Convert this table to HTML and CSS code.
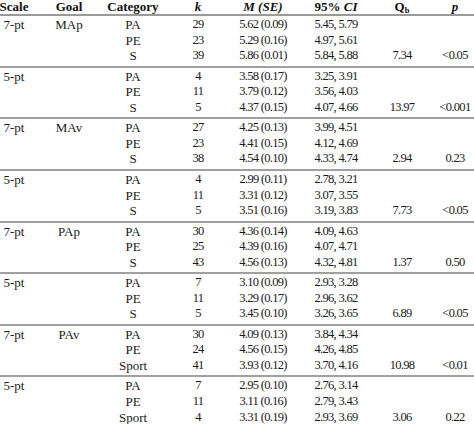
FILE: index.html
```html
<!DOCTYPE html>
<html lang="en">
<head>
<meta charset="utf-8">
<title>Table</title>
<link rel="stylesheet" href="styles.css">
</head>
<body>
<div class="table">
  <div class="row head">
    <div class="c">Scale</div>
    <div class="c">Goal</div>
    <div class="c">Category</div>
    <div class="c"><i>k</i></div>
    <div class="c"><i>M (SE)</i></div>
    <div class="c">95% <i>CI</i></div>
    <div class="c">Q<sub>b</sub></div>
    <div class="c"><i>p</i></div>
  </div>

  <div class="group">
    <div class="row"><div class="c">7-pt</div><div class="c">MAp</div><div class="c">PA</div><div class="c n">29</div><div class="c n">5.62 (0.09)</div><div class="c n">5.45, 5.79</div><div class="c n"></div><div class="c n"></div></div>
    <div class="row"><div class="c"></div><div class="c"></div><div class="c">PE</div><div class="c n">23</div><div class="c n">5.29 (0.16)</div><div class="c n">4.97, 5.61</div><div class="c n"></div><div class="c n"></div></div>
    <div class="row"><div class="c"></div><div class="c"></div><div class="c">S</div><div class="c n">39</div><div class="c n">5.86 (0.01)</div><div class="c n">5.84, 5.88</div><div class="c n">7.34</div><div class="c n">&lt;0.05</div></div>
  </div>

  <div class="group">
    <div class="row"><div class="c">5-pt</div><div class="c"></div><div class="c">PA</div><div class="c n">4</div><div class="c n">3.58 (0.17)</div><div class="c n">3.25, 3.91</div><div class="c n"></div><div class="c n"></div></div>
    <div class="row"><div class="c"></div><div class="c"></div><div class="c">PE</div><div class="c n">11</div><div class="c n">3.79 (0.12)</div><div class="c n">3.56, 4.03</div><div class="c n"></div><div class="c n"></div></div>
    <div class="row"><div class="c"></div><div class="c"></div><div class="c">S</div><div class="c n">5</div><div class="c n">4.37 (0.15)</div><div class="c n">4.07, 4.66</div><div class="c n">13.97</div><div class="c n">&lt;0.001</div></div>
  </div>

  <div class="group">
    <div class="row"><div class="c">7-pt</div><div class="c">MAv</div><div class="c">PA</div><div class="c n">27</div><div class="c n">4.25 (0.13)</div><div class="c n">3.99, 4.51</div><div class="c n"></div><div class="c n"></div></div>
    <div class="row"><div class="c"></div><div class="c"></div><div class="c">PE</div><div class="c n">23</div><div class="c n">4.41 (0.15)</div><div class="c n">4.12, 4.69</div><div class="c n"></div><div class="c n"></div></div>
    <div class="row"><div class="c"></div><div class="c"></div><div class="c">S</div><div class="c n">38</div><div class="c n">4.54 (0.10)</div><div class="c n">4.33, 4.74</div><div class="c n">2.94</div><div class="c n">0.23</div></div>
  </div>

  <div class="group">
    <div class="row"><div class="c">5-pt</div><div class="c"></div><div class="c">PA</div><div class="c n">4</div><div class="c n">2.99 (0.11)</div><div class="c n">2.78, 3.21</div><div class="c n"></div><div class="c n"></div></div>
    <div class="row"><div class="c"></div><div class="c"></div><div class="c">PE</div><div class="c n">11</div><div class="c n">3.31 (0.12)</div><div class="c n">3.07, 3.55</div><div class="c n"></div><div class="c n"></div></div>
    <div class="row"><div class="c"></div><div class="c"></div><div class="c">S</div><div class="c n">5</div><div class="c n">3.51 (0.16)</div><div class="c n">3.19, 3.83</div><div class="c n">7.73</div><div class="c n">&lt;0.05</div></div>
  </div>

  <div class="group">
    <div class="row"><div class="c">7-pt</div><div class="c">PAp</div><div class="c">PA</div><div class="c n">30</div><div class="c n">4.36 (0.14)</div><div class="c n">4.09, 4.63</div><div class="c n"></div><div class="c n"></div></div>
    <div class="row"><div class="c"></div><div class="c"></div><div class="c">PE</div><div class="c n">25</div><div class="c n">4.39 (0.16)</div><div class="c n">4.07, 4.71</div><div class="c n"></div><div class="c n"></div></div>
    <div class="row"><div class="c"></div><div class="c"></div><div class="c">S</div><div class="c n">43</div><div class="c n">4.56 (0.13)</div><div class="c n">4.32, 4.81</div><div class="c n">1.37</div><div class="c n">0.50</div></div>
  </div>

  <div class="group">
    <div class="row"><div class="c">5-pt</div><div class="c"></div><div class="c">PA</div><div class="c n">7</div><div class="c n">3.10 (0.09)</div><div class="c n">2.93, 3.28</div><div class="c n"></div><div class="c n"></div></div>
    <div class="row"><div class="c"></div><div class="c"></div><div class="c">PE</div><div class="c n">11</div><div class="c n">3.29 (0.17)</div><div class="c n">2.96, 3.62</div><div class="c n"></div><div class="c n"></div></div>
    <div class="row"><div class="c"></div><div class="c"></div><div class="c">S</div><div class="c n">5</div><div class="c n">3.45 (0.10)</div><div class="c n">3.26, 3.65</div><div class="c n">6.89</div><div class="c n">&lt;0.05</div></div>
  </div>

  <div class="group">
    <div class="row"><div class="c">7-pt</div><div class="c">PAv</div><div class="c">PA</div><div class="c n">30</div><div class="c n">4.09 (0.13)</div><div class="c n">3.84, 4.34</div><div class="c n"></div><div class="c n"></div></div>
    <div class="row"><div class="c"></div><div class="c"></div><div class="c">PE</div><div class="c n">24</div><div class="c n">4.56 (0.15)</div><div class="c n">4.26, 4.85</div><div class="c n"></div><div class="c n"></div></div>
    <div class="row"><div class="c"></div><div class="c"></div><div class="c">Sport</div><div class="c n">41</div><div class="c n">3.93 (0.12)</div><div class="c n">3.70, 4.16</div><div class="c n">10.98</div><div class="c n">&lt;0.01</div></div>
  </div>

  <div class="group last">
    <div class="row"><div class="c">5-pt</div><div class="c"></div><div class="c">PA</div><div class="c n">7</div><div class="c n">2.95 (0.10)</div><div class="c n">2.76, 3.14</div><div class="c n"></div><div class="c n"></div></div>
    <div class="row"><div class="c"></div><div class="c"></div><div class="c">PE</div><div class="c n">11</div><div class="c n">3.11 (0.16)</div><div class="c n">2.79, 3.43</div><div class="c n"></div><div class="c n"></div></div>
    <div class="row"><div class="c"></div><div class="c"></div><div class="c">Sport</div><div class="c n">4</div><div class="c n">3.31 (0.19)</div><div class="c n">2.93, 3.69</div><div class="c n">3.06</div><div class="c n">0.22</div></div>
  </div>
</div>
</body>
</html>
```

FILE: styles.css
```css
html, body {
  margin: 0;
  padding: 0;
  background: #ffffff;
  overflow: hidden;
}

body {
  width: 474px;
  height: 424px;
  font-family: "Liberation Serif", "Times New Roman", serif;
  font-size: 13px;
  color: #1a1a1a;
}

.table {
  margin-left: -10px;
  width: 492px;
}

.row {
  display: grid;
  grid-template-columns: 48px 62px 66px 64px 66px 80px 52px 54px;
  height: 15.6px;
  line-height: 15.6px;
}

.c {
  text-align: center;
  white-space: nowrap;
}

.n {
  font-size: 12.5px;
  letter-spacing: -0.7px;
}

.head {
  height: 13px;
  line-height: 13px;
  padding-bottom: 1px;
  border-bottom: 2px solid #9a9a9a;
  font-weight: bold;
  color: #111;
}

.head sub {
  font-size: 8.5px;
  line-height: 0;
  vertical-align: -2px;
}

.group {
  padding-top: 1px;
  padding-bottom: 1.87px;
  border-bottom: 2px solid #a0a0a0;
}

.group.last {
  border-bottom: none;
}
```
